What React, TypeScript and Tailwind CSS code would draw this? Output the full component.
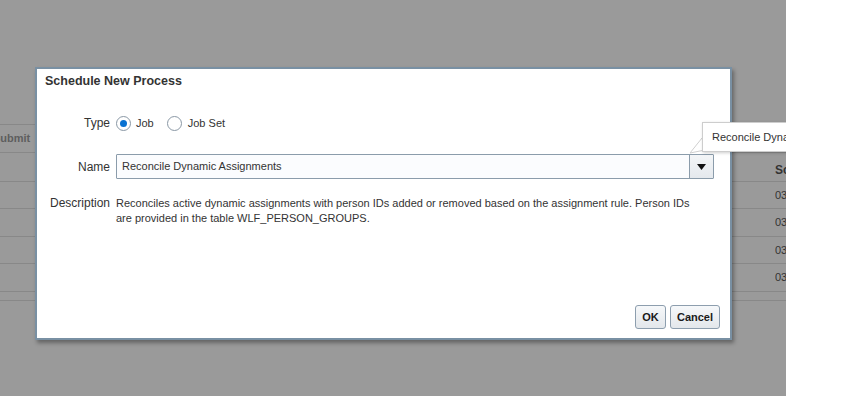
import React from "react";

const rows = [
  { left: "Submit", right: "", h: "h-[28px]" },
  { left: "", right: "Sc", h: "h-[29px]", bold: true },
  { left: "", right: "03", h: "h-[27px]" },
  { left: "", right: "03", h: "h-[28px]" },
  { left: "", right: "03", h: "h-[27px]" },
  { left: "", right: "03", h: "h-[28px]" },
  { left: "", right: "", h: "h-[9px]" },
];

export default function App() {
  return (
    <div
      className="flex w-[867px] h-[396px] overflow-hidden bg-white"
      style={{ fontFamily: '"Liberation Sans", Arial, sans-serif' }}
    >
      <div className="relative w-[786px] h-[396px] bg-[#9a9a9a] overflow-hidden">
        {/* background table */}
        <div className="pt-[124px]">
          <div className="border-t border-[#888888]">
            {rows.map((r, i) => (
              <div
                key={i}
                className={`flex items-center border-b border-[#888888] ${r.h}`}
              >
                <div className="-ml-[7px] text-[11px] font-bold text-[#5e5e5e]">
                  {r.left}
                </div>
                <div
                  className={`ml-auto w-[11px] overflow-hidden whitespace-nowrap text-[#333333] ${
                    r.bold ? "text-[12px] font-bold pt-[6px]" : "text-[11px]"
                  }`}
                >
                  {r.right}
                </div>
              </div>
            ))}
          </div>
        </div>

        {/* dialog */}
        <div className="absolute left-[35px] top-[67px] w-[697px] h-[273px] bg-white border-2 border-[#7990a3] shadow-[2px_3px_4px_rgba(0,0,0,0.35)] flex flex-col">
          <div className="mt-[4px] ml-[8px] text-[12.5px] leading-[16px] font-bold text-[#333333]">
            Schedule New Process
          </div>

          {/* Type */}
          <div className="mt-[24px] flex items-center h-[20px]">
            <div className="w-[73px] text-right text-[12px] text-[#333333]">Type</div>
            <div className="ml-[6px] flex items-center">
              <span className="w-[15px] h-[15px] rounded-full border border-[#8a98a5] bg-white flex items-center justify-center">
                <span className="w-[7px] h-[7px] rounded-full bg-[#0a72d1]" />
              </span>
              <span className="ml-[5px] text-[11px] text-[#333333]">Job</span>
              <span className="ml-[13px] w-[15px] h-[15px] rounded-full border border-[#8a98a5] bg-white" />
              <span className="ml-[6px] text-[11px] text-[#333333]">Job Set</span>
            </div>
          </div>

          {/* Name */}
          <div className="mt-[21px] flex items-center h-[25px]">
            <div className="w-[73px] text-right text-[12px] text-[#333333]">Name</div>
            <div className="ml-[6px] w-[598px] h-[25px] flex border border-[#8b9cab] bg-[#fbfcfe] rounded-[1px]">
              <div className="flex-1 flex items-center pl-[5px] text-[11px] text-[#333333]">
                Reconcile Dynamic Assignments
              </div>
              <div className="w-[24px] h-full border-l border-[#8b9cab] bg-gradient-to-b from-[#f3f5f7] to-[#e5e9ed] flex items-center justify-center">
                <svg width="9" height="6" viewBox="0 0 9 6">
                  <path d="M0 0 L9 0 L4.5 6 Z" fill="#111111" />
                </svg>
              </div>
            </div>
          </div>

          {/* Description */}
          <div className="mt-[17px] flex items-start">
            <div className="w-[73px] text-right text-[12px] leading-[15px] text-[#333333]">
              Description
            </div>
            <div className="ml-[6px] w-[580px] text-[11px] leading-[15px] text-[#333333]">
              Reconciles active dynamic assignments with person IDs added or removed based on the
              assignment rule. Person IDs are provided in the table WLF_PERSON_GROUPS.
            </div>
          </div>

          {/* buttons */}
          <div className="mt-auto mb-[9px] mr-[10px] flex justify-end gap-[4px]">
            <button className="w-[31px] h-[24px] rounded-[3px] border border-[#8d9eae] bg-gradient-to-b from-[#f6f8fa] to-[#e3e7eb] text-[11px] font-bold text-[#1a1a1a]">
              OK
            </button>
            <button className="w-[50px] h-[24px] rounded-[3px] border border-[#8d9eae] bg-gradient-to-b from-[#f6f8fa] to-[#e3e7eb] text-[11px] font-bold text-[#1a1a1a]">
              Cancel
            </button>
          </div>
        </div>

        {/* tooltip */}
        <svg
          className="absolute left-[686px] top-[138px]"
          width="20"
          height="18"
          viewBox="0 0 20 18"
        >
          <path d="M16 0 L4 15 L19 12 Z" fill="#ffffff" stroke="#cfcfcf" strokeWidth="1" />
        </svg>
        <div className="absolute left-[702px] top-[122px] w-[200px] h-[30px] bg-white border border-[#cdcdcd] shadow-[1px_1px_3px_rgba(0,0,0,0.2)] flex items-center pl-[9px] text-[11px] text-[#333333] whitespace-nowrap">
          Reconcile Dynamic Assignments
        </div>
        <div className="absolute left-[703px] top-[140px] w-[12px] h-[11px] bg-white" />
      </div>
      <div className="flex-1 bg-white" />
    </div>
  );
}
